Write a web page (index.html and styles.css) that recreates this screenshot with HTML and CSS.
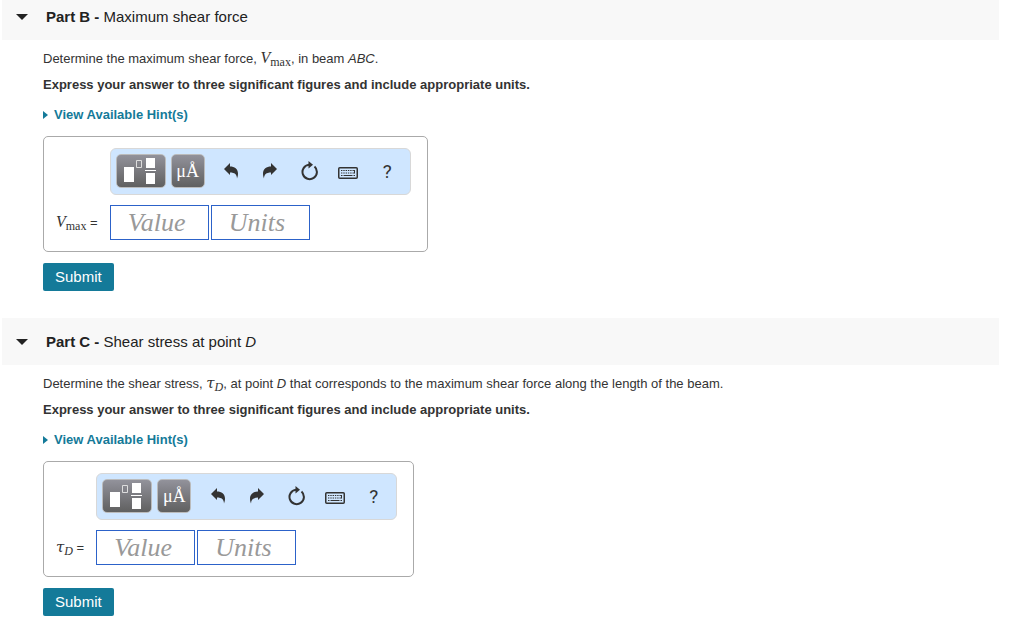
FILE: index.html
```html
<!DOCTYPE html>
<html lang="en">
<head>
  <meta charset="UTF-8">
  <meta name="viewport" content="width=device-width, initial-scale=1.0">
  <title>Maximum shear force and shear stress</title>
  <link rel="stylesheet" href="styles.css">
</head>
<body>

<!-- shared icons -->
<svg class="sprite" aria-hidden="true">
  <symbol id="icon-template" viewBox="0 0 48 32">
    <path fill="#fff" d="M7 12h10v15H7zM29 3h9v10h-9zM29 18h9v11h-9zM28 15h11v1H28z"/>
    <path fill="none" stroke="#ddd" d="M19.500 5.500h5v7h-5z"/>
  </symbol>
  <symbol id="icon-undo" viewBox="0 0 14 16">
    <path d="M0 6 6 0v3.500c4.500 0 8 2.500 8 7 0 2-.4 3.500-1 5-.1-4-2.200-6-7-6V12z"/>
  </symbol>
  <symbol id="icon-redo" viewBox="0 0 14 16">
    <path d="M14 6 8 0v3.500c-4.500 0-8 2.500-8 7 0 2 .4 3.500 1 5 .1-4 2.200-6 7-6V12z"/>
  </symbol>
  <symbol id="icon-reset" viewBox="0 0 18 20">
    <path fill="none" stroke="#333" stroke-width="2" d="M14.500 5.600A7.200 7.200 0 1 1 9 3.800h1"/>
    <path d="M8.500 0l4.500 3.700L8.500 7.500z"/>
  </symbol>
  <symbol id="icon-keyboard" viewBox="0 0 20 12">
    <rect x=".75" y=".75" width="18.500" height="10.500" rx="1" fill="none" stroke="#333" stroke-width="1.500"/>
    <path fill="none" stroke="#333" stroke-dasharray="1.400 .9" d="M3 3.500h14M3 6h14"/>
    <path fill="none" stroke="#333" d="M3 8.500h1.500M5.500 8.500h9M15.500 8.500H17M16.500 3v3.500"/>
  </symbol>
</svg>

<main>
  <section class="part">
    <header class="part-header">
      <button class="toggle" aria-label="Collapse Part B"></button>
      <h2><b>Part B - </b>Maximum shear force</h2>
    </header>
    <div class="part-body">
      <p>Determine the maximum shear force, <span class="math"><i>V</i><sub>max</sub></span>, in beam <i>ABC</i>.</p>
      <p class="instructions">Express your answer to three significant figures and include appropriate units.</p>
      <a class="hints" href="#hints-b">View Available Hint(s)</a>
      <form>
        <div class="answer">
          <div class="toolbar">
            <button type="button" class="tool template" aria-label="Templates"><svg><use href="#icon-template"/></svg></button>
            <button type="button" class="tool units">μÅ</button>
            <button type="button" class="icon" aria-label="Undo"><svg width="14" height="16"><use href="#icon-undo"/></svg></button>
            <button type="button" class="icon" aria-label="Redo"><svg width="14" height="16"><use href="#icon-redo"/></svg></button>
            <button type="button" class="icon" aria-label="Reset"><svg width="18" height="20"><use href="#icon-reset"/></svg></button>
            <button type="button" class="icon keyboard" aria-label="Keyboard shortcuts"><svg width="20" height="12"><use href="#icon-keyboard"/></svg></button>
            <button type="button" class="icon">?</button>
          </div>
          <label for="value-b"><span class="math"><i>V</i><sub>max</sub></span> =</label>
          <div class="fields">
            <input id="value-b" type="text" placeholder="Value">
            <input type="text" placeholder="Units" aria-label="Units of maximum shear force">
          </div>
        </div>
        <button type="button" class="submit">Submit</button>
      </form>
    </div>
  </section>

  <section class="part">
    <header class="part-header">
      <button class="toggle" aria-label="Collapse Part C"></button>
      <h2><b>Part C - </b>Shear stress at point <i>D</i></h2>
    </header>
    <div class="part-body">
      <p>Determine the shear stress, <span class="math"><i class="greek">τ</i><sub><i>D</i></sub></span>, at point <i>D</i> that corresponds to the maximum shear force along the length of the beam.</p>
      <p class="instructions">Express your answer to three significant figures and include appropriate units.</p>
      <a class="hints" href="#hints-c">View Available Hint(s)</a>
      <form>
        <div class="answer">
          <div class="toolbar">
            <button type="button" class="tool template" aria-label="Templates"><svg><use href="#icon-template"/></svg></button>
            <button type="button" class="tool units">μÅ</button>
            <button type="button" class="icon" aria-label="Undo"><svg width="14" height="16"><use href="#icon-undo"/></svg></button>
            <button type="button" class="icon" aria-label="Redo"><svg width="14" height="16"><use href="#icon-redo"/></svg></button>
            <button type="button" class="icon" aria-label="Reset"><svg width="18" height="20"><use href="#icon-reset"/></svg></button>
            <button type="button" class="icon keyboard" aria-label="Keyboard shortcuts"><svg width="20" height="12"><use href="#icon-keyboard"/></svg></button>
            <button type="button" class="icon">?</button>
          </div>
          <label for="value-c"><span class="math"><i class="greek">τ</i><sub><i>D</i></sub></span> =</label>
          <div class="fields">
            <input id="value-c" type="text" placeholder="Value">
            <input type="text" placeholder="Units" aria-label="Units of shear stress">
          </div>
        </div>
        <button type="button" class="submit">Submit</button>
      </form>
    </div>
  </section>
</main>

</body>
</html>
```
FILE: styles.css
```css
* {
  box-sizing: border-box;
}
body {
  margin: 0;
  font-family: "Liberation Sans", Arial, sans-serif;
  font-size: 13px;
  line-height: 18px;
  color: #333;
  background-color: #fff;
}
main {
  margin: 0 25px 0 2px;
}
button {
  margin: 0;
  padding: 0;
  border: none;
  background: none;
  color: #333;
  font-family: inherit;
  cursor: pointer;
}
.sprite {
  display: none;
}
.part-header {
  display: flex;
  align-items: center;
  gap: 18px;
  padding: 14px;
  background-color: #f8f8f8;
}
.part:first-child .part-header {
  padding-top: 7px;
}
.part-header h2 {
  margin: 0;
  font-size: 15px;
  font-weight: normal;
  line-height: 19px;
  color: #222;
}
.toggle {
  border-top: 6px solid #222;
  border-left: 6px solid transparent;
  border-right: 6px solid transparent;
}
.part-body {
  padding: 10px 41px 27px;
}
p {
  margin: 0 0 8px;
}
.instructions {
  margin-bottom: 12px;
  font-weight: bold;
}
.math {
  font-family: "Liberation Serif", "Times New Roman", serif;
  font-size: 16px;
  line-height: 1px;
}
.math sub {
  font-size: 12px;
  line-height: 1px;
  vertical-align: -3px;
}
.math .greek {
  font-family: "DejaVu Serif", serif;
  font-size: 15px;
}
.hints {
  display: flex;
  align-items: center;
  gap: 6px;
  width: fit-content;
  color: #147a99;
  font-weight: bold;
  text-decoration: none;
}
.hints::before {
  content: "";
  border-left: 5px solid #147a99;
  border-top: 4px solid transparent;
  border-bottom: 4px solid transparent;
}
form {
  display: flex;
  flex-direction: column;
  align-items: flex-start;
  gap: 11px;
  margin-top: 12px;
}
.answer {
  display: grid;
  grid-template-columns: auto auto;
  align-items: center;
  gap: 10px 12px;
  padding: 11px 16px 11px 12px;
  border: 1px solid #aaa;
  border-radius: 5px;
}
.toolbar {
  grid-column: 2;
  display: flex;
  align-items: center;
  padding: 5px 3px 6px 5px;
  border: 1px solid #d8d8d8;
  border-radius: 6px;
  background-color: #cfe6ff;
}
.tool {
  height: 34px;
  border: 1px solid #bbb;
  border-radius: 5px;
  background: linear-gradient(#92929b, #606060);
  color: #fff;
}
.template {
  width: 50px;
  margin-right: 5px;
}
.template svg {
  display: block;
  width: 48px;
  height: 32px;
}
.units {
  width: 34px;
  margin-right: 7px;
  font-family: "Liberation Serif", "Times New Roman", serif;
  font-size: 18px;
}
.icon {
  display: flex;
  align-items: center;
  justify-content: center;
  width: 39px;
  height: 34px;
  font-family: Roboto, sans-serif;
  font-size: 19px;
}
.icon svg {
  fill: #333;
}
.keyboard {
  padding-top: 4px;
}
.fields {
  display: flex;
  gap: 2px;
}
.fields input {
  width: 99px;
  height: 35px;
  padding: 0 17px;
  border: 1px solid #2c62c9;
  font-family: "Liberation Serif", "Times New Roman", serif;
  font-size: 26px;
  font-style: italic;
}
.fields input::placeholder {
  color: #999;
}
.submit {
  padding: 5px 12px;
  border-radius: 2px;
  background-color: #147a99;
  color: #fff;
  font-size: 15px;
  line-height: 18px;
}
```
